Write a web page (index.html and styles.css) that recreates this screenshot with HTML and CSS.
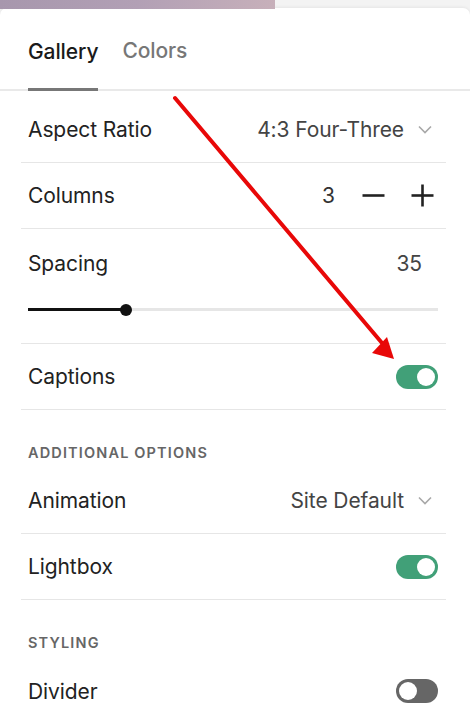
FILE: index.html
```html
<!DOCTYPE html>
<html>
<head>
<meta charset="utf-8">
<link rel="stylesheet" href="styles.css">
</head>
<body>
<div class="topbar"><div class="photo"></div></div>
<div class="panel">
  <div class="tabs">
    <div class="tab active">Gallery</div>
    <div class="tab">Colors</div>
  </div>
  <div class="list">
    <div class="row">
      <span class="label">Aspect Ratio</span>
      <span class="value">4:3 Four-Three
        <svg class="chev" width="14" height="9" viewBox="0 0 14 9"><polyline points="1,1.5 7,7.5 13,1.5" fill="none" stroke="#a8a8a8" stroke-width="1.6"/></svg>
      </span>
    </div>
    <div class="row">
      <span class="label">Columns</span>
      <span class="stepper">
        <span class="num">3</span>
        <svg class="step-icon" width="23" height="23" viewBox="0 0 23 23"><line x1="0.5" y1="11.5" x2="22.5" y2="11.5" stroke="#222" stroke-width="2.6"/></svg>
        <svg class="step-icon" width="23" height="23" viewBox="0 0 23 23"><line x1="0.5" y1="11.5" x2="22.5" y2="11.5" stroke="#222" stroke-width="2.6"/><line x1="11.5" y1="0.5" x2="11.5" y2="22.5" stroke="#222" stroke-width="2.6"/></svg>
      </span>
    </div>
    <div class="row row-slider">
      <div class="slider-head">
        <span class="label">Spacing</span>
        <span class="value num-right">35</span>
      </div>
      <div class="track"><div class="fill" style="width: 98px"></div><div class="thumb"></div></div>
    </div>
    <div class="row">
      <span class="label">Captions</span>
      <span class="toggle on"><span class="knob"></span></span>
    </div>
    <div class="section">ADDITIONAL OPTIONS</div>
    <div class="row">
      <span class="label">Animation</span>
      <span class="value">Site Default
        <svg class="chev" width="14" height="9" viewBox="0 0 14 9"><polyline points="1,1.5 7,7.5 13,1.5" fill="none" stroke="#a8a8a8" stroke-width="1.6"/></svg>
      </span>
    </div>
    <div class="row">
      <span class="label">Lightbox</span>
      <span class="toggle on"><span class="knob"></span></span>
    </div>
    <div class="section">STYLING</div>
    <div class="row no-border">
      <span class="label">Divider</span>
      <span class="toggle off"><span class="knob"></span></span>
    </div>
  </div>
</div>
<svg class="arrow" width="470" height="718" viewBox="0 0 470 718">
  <line x1="175" y1="98" x2="382" y2="343" stroke="#e80808" stroke-width="4" stroke-linecap="round"/>
  <polygon points="394,359 372,353 387,337" fill="#e80808"/>
</svg>
</body>
</html>
```

FILE: styles.css
```css
html, body {
  margin: 0;
  padding: 0;
}
body {
  width: 470px;
  height: 718px;
  overflow: hidden;
  background: #f3f3f3;
  font-family: Inter, "Liberation Sans", sans-serif;
  color: #222;
  position: relative;
}
.topbar {
  height: 9px;
  display: flex;
  background: #f3f3f3;
}
.photo {
  width: 275px;
  background: linear-gradient(90deg, #a797ad 0%, #b2a0b5 50%, #c7b0ba 100%);
}
.panel {
  background: #fff;
  border-radius: 7px 7px 0 0;
  margin-top: -1px;
  box-shadow: 0 -1px 3px rgba(0,0,0,0.06);
  height: 710px;
}
.tabs {
  display: flex;
  gap: 24px;
  padding: 4px 28px 0;
  height: 77px;
  border-bottom: 2px solid #e9e9e9;
}
.tab {
  display: flex;
  align-items: center;
  font-size: 21px;
  font-weight: 500;
  color: #777;
  letter-spacing: -0.1px;
}
.tab.active {
  color: #1a1a1a;
  border-bottom: 3px solid #777;
  margin-bottom: -2px;
  padding-top: 3px;
}
.list {
  padding: 6px 24px 0 21px;
}
.row {
  box-sizing: border-box;
  height: 66px;
  display: flex;
  align-items: center;
  justify-content: space-between;
  padding: 0 8px 0 7px;
  border-bottom: 1px solid #e6e6e6;
}
.row.no-border {
  border-bottom: none;
}
.label {
  font-size: 21px;
  color: #222;
  letter-spacing: -0.1px;
}
.value {
  font-size: 21px;
  color: #444;
  display: flex;
  align-items: center;
  letter-spacing: -0.1px;
}
.chev {
  margin-left: 14px;
  margin-right: 6px;
}
.stepper {
  display: flex;
  align-items: center;
  margin-right: 4px;
}
.num {
  font-size: 21px;
  color: #333;
  margin-right: 27px;
}
.step-icon + .step-icon {
  margin-left: 26px;
}
.row-slider {
  height: 115px;
  flex-direction: column;
  align-items: stretch;
  justify-content: flex-start;
  padding-top: 20px;
}
.slider-head {
  display: flex;
  justify-content: space-between;
  align-items: center;
  height: 28px;
}
.num-right {
  margin-right: 16px;
}
.track {
  margin-top: 31px;
  height: 3px;
  background: #e6e6e6;
  position: relative;
  display: flex;
  align-items: center;
}
.fill {
  height: 3px;
  background: #111;
}
.thumb {
  width: 12px;
  height: 12px;
  border-radius: 50%;
  background: #111;
  margin-left: -6px;
}
.toggle {
  width: 42px;
  height: 24px;
  border-radius: 12px;
  display: flex;
  align-items: center;
  padding: 0 3px;
  box-sizing: border-box;
}
.toggle.on {
  background: #41a078;
  justify-content: flex-end;
}
.toggle.off {
  background: #666;
  justify-content: flex-start;
}
.knob {
  width: 18px;
  height: 18px;
  border-radius: 50%;
  background: #fff;
}
.section {
  box-sizing: border-box;
  height: 58px;
  padding: 36px 7px 0;
  font-size: 14.5px;
  font-weight: 600;
  letter-spacing: 1.15px;
  color: #666;
  line-height: 14px;
}
.arrow {
  position: absolute;
  left: 0;
  top: 0;
  pointer-events: none;
}
```
